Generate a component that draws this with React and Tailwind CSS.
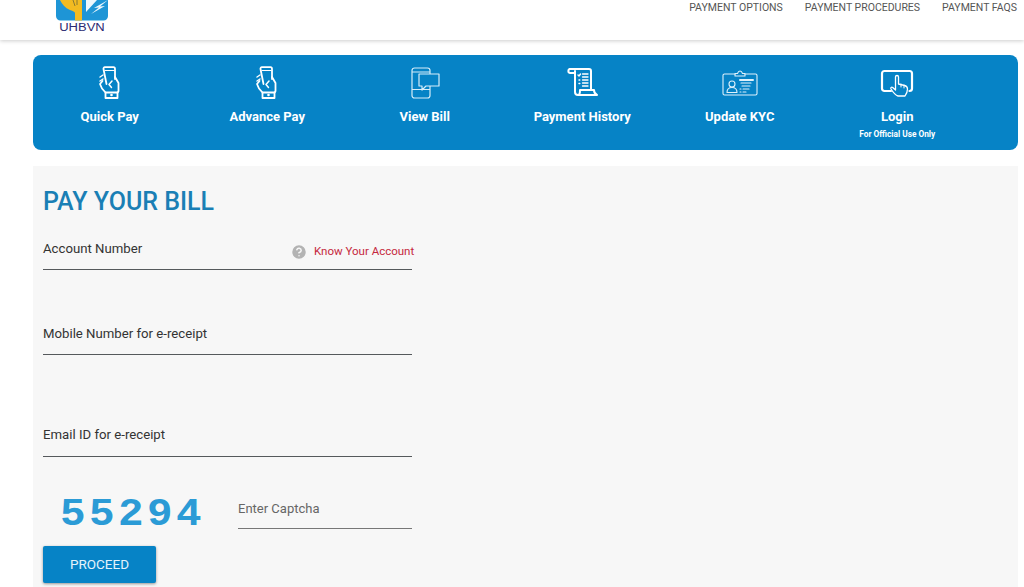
import { CircleHelp } from "lucide-react";

function PhoneHand() {
  return (
    <svg width="40" height="40" viewBox="0 0 40 40" fill="none" stroke="white" strokeWidth="1.800" strokeLinejoin="round" strokeLinecap="round">
      <path d="M16.500 22L13.500 7c-.2-1 .4-1.800 1.400-1.800h8.600c1 0 1.500.7 1.500 1.700V17" />
      <path d="M15 8.500h9" strokeWidth="1.200" />
      <path d="M25 15l3.500 6v8l-1 2v5H15.500v-5.500l-3.500-4-2-4.500 2.500-3" />
      <path d="M22 19l-3 3.500 2.500 3" strokeWidth="1.500" />
      <path d="M15.500 30.500h12" />
      <circle cx="21.500" cy="33" r="1.300" fill="white" stroke="none" />
      <path d="M10 15l3-2M10 19l3-2" strokeWidth="1.400" />
    </svg>
  );
}

function BillIcon() {
  return (
    <svg width="40" height="40" viewBox="0 0 40 40" fill="none" stroke="#d6edf9" strokeWidth="1.200" strokeLinejoin="round">
      <rect x="7" y="6" width="18" height="30" rx="2.500" />
      <path d="M7 10h18M7 27.500h18" />
      <path d="M14 12h20v12H21l-4 4v-4h-3z" fill="#0683c6" />
    </svg>
  );
}

function ScrollIcon() {
  return (
    <svg width="40" height="40" viewBox="0 0 40 40" fill="none" stroke="white" strokeLinejoin="round" strokeLinecap="round">
      <path d="M8 7h19c1.300 0 2 .8 2 2v19" strokeWidth="2" />
      <path d="M8 7c-1.800 0-2.500 3.500 0 4h5M13 9v21c0 2 1.300 3 3 3h19c-2-1-3-2.500-3-5H18c0 2 0 5-2 5" strokeWidth="2" />
      <path d="M16 13l1 1 1.500-2M17 18h.8M17 21.500h.8" strokeWidth="1.400" />
      <path d="M20.500 12h5.500M20.500 15h5.500M20.500 18h5.500M20.500 21h5.500M20.500 24h5.500" strokeWidth="1.300" />
    </svg>
  );
}

function KycIcon() {
  return (
    <svg width="40" height="40" viewBox="0 0 40 40" fill="none" stroke="#dff1fb" strokeWidth="1.100" strokeLinejoin="round" strokeLinecap="round">
      <path d="M15 12H4.500C3.700 12 3 12.700 3 13.500v18c0 .8.700 1.500 1.500 1.500h31c.8 0 1.500-.7 1.500-1.500v-18c0-.8-.7-1.500-1.500-1.500H25" />
      <path d="M15 14v-2.500h2.500C18 10 19 9 20 9s2 1 2.500 2.500H25V14z" />
      <circle cx="12" cy="22" r="3" />
      <path d="M7 30.500c0-3.500 2-5 5-5s5 1.500 5 5z" />
      <path d="M20 18h13" strokeWidth="2" />
      <path d="M21 21h10M22 24h8M20 27h1M23 27h6M20 30h1M23 30h3" />
    </svg>
  );
}

function LoginIcon() {
  return (
    <svg width="40" height="40" viewBox="0 0 40 40" fill="none" stroke="white" strokeLinejoin="round" strokeLinecap="round">
      <path d="M14 29H7.500C6 29 5 28 5 26.500v-15C5 10 6 9 7.500 9h25c1.500 0 2.500 1 2.500 2.500v15c0 1.500-1 2.500-2.500 2.500" strokeWidth="2.200" />
      <path d="M21 34c-3-.8-4.500-3-7-7-.7-1.200.5-2.300 1.700-1.500l2.800 2.500V15c0-2 3-2 3 0v7l6 1.500c2 .5 3 1.500 3 3.500 0 2.500-1.200 5-2.500 7z" strokeWidth="1.300" fill="#0683c6" />
      <path d="M24 22v3M27 23v3" strokeWidth="1" />
    </svg>
  );
}

const navItems = [
  { label: "Quick Pay", icon: PhoneHand },
  { label: "Advance Pay", icon: PhoneHand },
  { label: "View Bill", icon: BillIcon },
  { label: "Payment History", icon: ScrollIcon },
  { label: "Update KYC", icon: KycIcon },
  { label: "Login", icon: LoginIcon, sub: "For Official Use Only" },
];

function Field({ label, className }) {
  return (
    <div className={`w-[369px] border-b border-[#55595c] text-[13.2px] leading-[20px] text-[#333] ${className}`}>
      {label}
    </div>
  );
}

export default function App() {
  return (
    <div className="h-[587px] overflow-hidden bg-white font-['Roboto',sans-serif]">
      {/* Top header */}
      <header className="flex h-[40px] justify-between overflow-hidden bg-white shadow-[0_1px_4px_rgba(0,0,0,0.2)]">
        <div className="ml-[56px] w-[52px]">
          <svg width="52" height="21" viewBox="0 0 52 21" className="block">
            <path d="M0 0h52v16c0 2.500-2 4.500-4.500 4.500h-43C2 20.500 0 18.500 0 16z" fill="#1e95d6" />
            <path d="M4 0c2 4 5 8 10 10 3 1 5 2 5 3v7.500h7V0z" fill="#f3bb21" />
            <path d="M17 0l2 6M21 0v5" stroke="#8a7a30" strokeWidth="1" fill="none" />
            <path d="M30 0h11l-11 12z" fill="#eef7fc" />
            <path d="M52 0L38 8l5-.5-8 6.500 14-8-5 .5 8-6.500z" fill="#eef7fc" />
          </svg>
          <div className="mt-[1px] origin-center scale-x-[1.3] text-center font-['Liberation_Sans',sans-serif] text-[10px] leading-[11px] text-[#2c2a72]">
            UHBVN
          </div>
        </div>
        <nav className="mr-[7px] flex gap-[22px] pt-[1px] text-[10.5px] leading-[13px] text-[#555]">
          <a>PAYMENT OPTIONS</a>
          <a>PAYMENT PROCEDURES</a>
          <a>PAYMENT FAQS</a>
        </nav>
      </header>

      {/* Blue menu bar */}
      <div className="mt-[15px] mr-[6px] ml-[33px] h-[95px] rounded-lg bg-[#0683c6]">
        <div className="-ml-[2px] grid grid-cols-[repeat(6,157.5px)] pt-[7px]">
          {navItems.map(({ label, icon: Icon, sub }) => (
            <div key={label} className="flex flex-col items-center text-white">
              <Icon />
              <div className="mt-[6px] text-[13px] font-bold leading-[18px]">{label}</div>
              {sub && <div className="mt-[2px] text-[8.3px] font-bold leading-[12px]">{sub}</div>}
            </div>
          ))}
        </div>
      </div>

      {/* Pay your bill panel */}
      <main className="mt-[16px] mr-[6px] ml-[33px] h-[421px] bg-[#f7f7f7] pt-[20px] pl-[10px]">
        <h1 className="text-[25px] font-medium leading-[32px] text-[#1a7fb5]">PAY YOUR BILL</h1>

        <div className="relative">
          <Field label="Account Number" className="mt-[20px] h-[32px] pt-[1px]" />
          <div className="absolute top-[5px] left-[247px] flex items-center gap-[6px] text-[11.5px] leading-[16px] text-[#c5283d]">
            <CircleHelp size={18} className="fill-[#b3b3b3] text-[#f7f7f7]" />
            <span className="mb-[2px]">Know Your Account</span>
          </div>
        </div>

        <Field label="Mobile Number for e-receipt" className="mt-[49px] h-[36px] pt-[5px]" />
        <Field label="Email ID for e-receipt" className="mt-[66px] h-[36px] pt-[4px]" />

        <div className="mt-[39px] flex items-start">
          <div className="ml-[17px] w-[178px]">
            <div className="origin-left scale-x-[1.12] font-['Liberation_Mono',monospace] text-[38px] font-bold leading-[38px] tracking-[3.1px] text-[#2b9bd6]">
              55294
            </div>
          </div>
          <div className="h-[33px] w-[174px] border-b border-[#777] pt-[3px] text-[13px] leading-[20px] text-[#666]">
            Enter Captcha
          </div>
        </div>

        <button className="mt-[12px] h-[37px] w-[113px] rounded-[2px] bg-[#0683c6] text-[13.5px] font-normal text-[#e4f3fb] shadow-[0_1px_3px_rgba(0,0,0,0.4)]">
          PROCEED
        </button>
      </main>
    </div>
  );
}
